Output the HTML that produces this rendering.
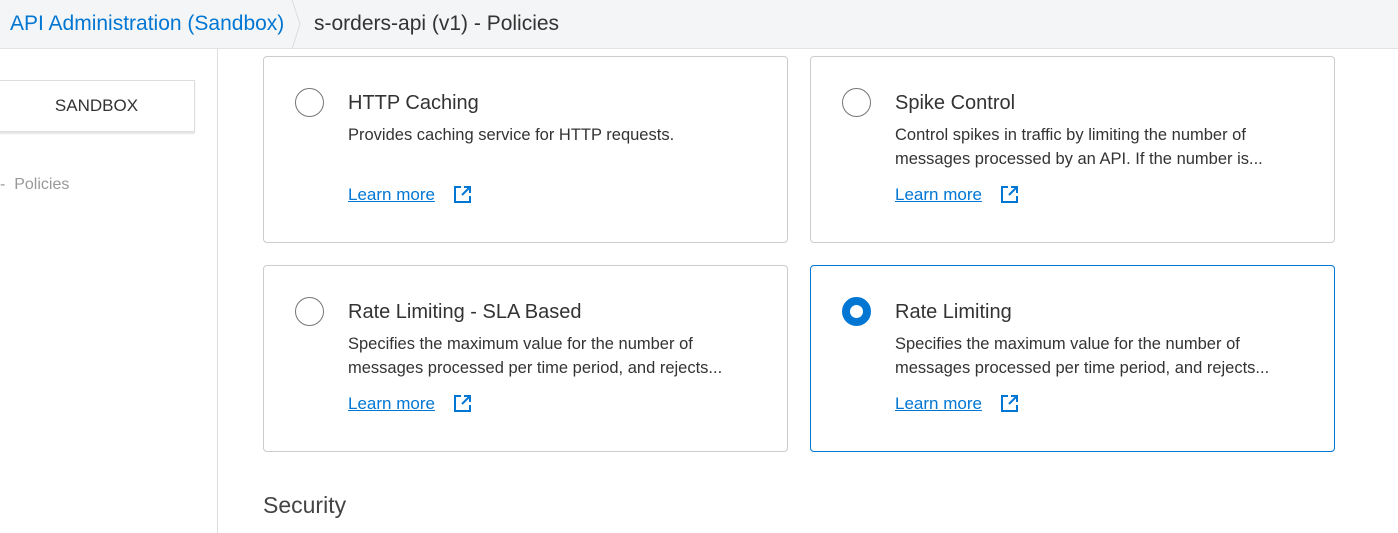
<!DOCTYPE html>
<html><head><style>
*{box-sizing:border-box;margin:0;padding:0}
body{width:1398px;height:533px;overflow:hidden;background:#fff;font-family:"Liberation Sans",sans-serif;position:relative}
.hdr{position:absolute;left:0;top:0;width:1398px;height:49px;background:#f4f5f6;border-bottom:1px solid #e3e3e3}
.hdr .a{position:absolute;left:10px;top:12px;font-size:21px;color:#0176d3}
.hdr .b{position:absolute;left:314px;top:12px;font-size:21px;color:#333}
.side{position:absolute;left:217px;top:49px;width:1px;height:484px;background:#ddd}
.sb{position:absolute;left:-2px;top:80px;width:197px;height:52px;border:1px solid #ddd;box-shadow:0 2px 1px #e6e6e6;font-size:17px;color:#333;text-align:center;line-height:50px}
.pol{position:absolute;left:0;top:176px;font-size:16px;color:#999}
.card{position:absolute;width:525px;height:187px;border:1px solid #ccc;border-radius:4px}
.card.sel{border-color:#0176d3}
.r{position:absolute;left:31px;top:31px;width:29px;height:29px;border:1.5px solid #777;border-radius:50%}
.sel .r{border:8px solid #0176d3}
.t{position:absolute;left:84px;top:35px;font-size:20px;color:#333}
.d{position:absolute;left:84px;top:66px;font-size:16.5px;line-height:24px;color:#333;width:395px}
.l{position:absolute;left:84px;top:128px;font-size:17px;color:#0176d3;text-decoration:underline}
.l svg{position:absolute;left:105px;top:0px}
.sec{position:absolute;left:263px;top:492px;font-size:23px;color:#444}
</style></head><body>
<div class="hdr"><span class="a">API Administration (Sandbox)</span>
<svg style="position:absolute;left:290px;top:0" width="12" height="49"><path d="M2 0 L10 24 L2 49" fill="none" stroke="#ddd"/></svg>
<span class="b">s-orders-api (v1) - Policies</span></div>
<div class="side"></div>
<div class="sb">SANDBOX</div>
<div class="pol">- &nbsp;Policies</div>
<div class="card" style="left:263px;top:56px"><div class="r"></div><div class="t">HTTP Caching</div><div class="d">Provides caching service for HTTP requests.</div><div class="l">Learn more<svg width="19" height="19" viewBox="0 0 19 19"><path d="M8 2H2V17H17V11M11 2H17V8M17 2L9 10" fill="none" stroke="#0176d3" stroke-width="2"/></svg></div></div>
<div class="card" style="left:810px;top:56px"><div class="r"></div><div class="t">Spike Control</div><div class="d">Control spikes in traffic by limiting the number of messages processed by an API. If the number is...</div><div class="l">Learn more<svg width="19" height="19" viewBox="0 0 19 19"><path d="M8 2H2V17H17V11M11 2H17V8M17 2L9 10" fill="none" stroke="#0176d3" stroke-width="2"/></svg></div></div>
<div class="card" style="left:263px;top:265px"><div class="r"></div><div class="t">Rate Limiting - SLA Based</div><div class="d">Specifies the maximum value for the number of messages processed per time period, and rejects...</div><div class="l">Learn more<svg width="19" height="19" viewBox="0 0 19 19"><path d="M8 2H2V17H17V11M11 2H17V8M17 2L9 10" fill="none" stroke="#0176d3" stroke-width="2"/></svg></div></div>
<div class="card sel" style="left:810px;top:265px"><div class="r"></div><div class="t">Rate Limiting</div><div class="d">Specifies the maximum value for the number of messages processed per time period, and rejects...</div><div class="l">Learn more<svg width="19" height="19" viewBox="0 0 19 19"><path d="M8 2H2V17H17V11M11 2H17V8M17 2L9 10" fill="none" stroke="#0176d3" stroke-width="2"/></svg></div></div>
<div class="sec">Security</div>
</body></html>
